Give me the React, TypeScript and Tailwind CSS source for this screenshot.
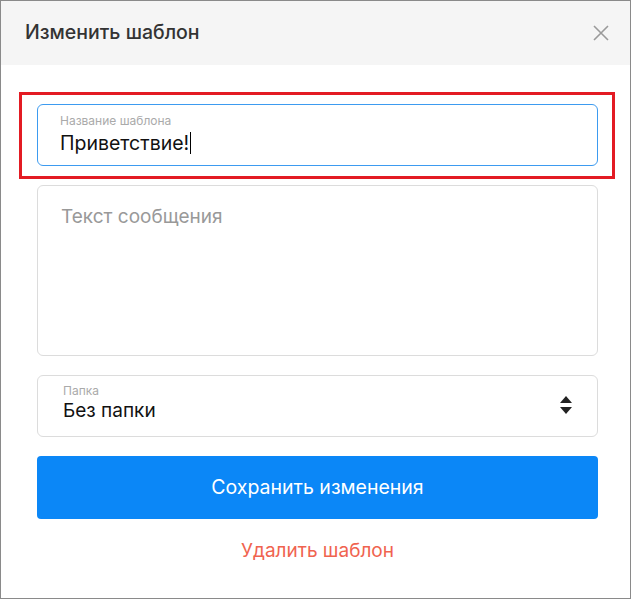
import React from "react";

export default function App() {
  return (
    <div className="w-[632px] h-[600px] bg-white" style={{ fontFamily: "Inter, Roboto, 'Noto Sans', sans-serif" }}>
      <div className="relative w-[631px] h-[599px] border border-[#8a8a8a] bg-white flex flex-col">
        <div className="h-[64px] bg-[#f5f5f5] flex items-center justify-between pl-[24px] pr-[21px]">
          <span className="text-[19.5px] font-medium text-[#333]">Изменить шаблон</span>
          <svg width="16" height="16" viewBox="0 0 16 16" className="text-[#9a9a9a]">
            <path d="M1 1 L15 15 M15 1 L1 15" stroke="currentColor" strokeWidth="1.6" />
          </svg>
        </div>
        <div className="flex flex-col pl-[36px] pt-[39px]">
          <div className="w-[561px] h-[62px] border border-[#3d9bf0] rounded-[6px] flex flex-col pl-[22px] pt-[8px]">
            <span className="text-[12px] leading-[16px] text-[#aaa]">Название шаблона</span>
            <span className="text-[19.5px] leading-[28px] text-[#111] flex items-center">
              Приветствие!<span className="inline-block w-px h-[22px] bg-black ml-[1px]" />
            </span>
          </div>
          <div className="mt-[19px] w-[561px] h-[171px] border border-[#dcdcdc] rounded-[6px] pl-[23px] pt-[18px]">
            <span className="text-[19px] leading-[26px] text-[#999]">Текст сообщения</span>
          </div>
          <div className="mt-[19px] w-[561px] h-[62px] border border-[#dcdcdc] rounded-[6px] flex items-center justify-between pl-[25px] pr-[24px]">
            <div className="flex flex-col -mt-[6px]">
              <span className="text-[12px] leading-[16px] text-[#aaa]">Папка</span>
              <span className="text-[19px] leading-[24px] text-[#111]">Без папки</span>
            </div>
            <svg width="14" height="20" viewBox="0 0 14 20" className="-mt-[3px]">
              <path d="M7 1 L13 8 L1 8 Z" fill="#222" />
              <path d="M1 12 L13 12 L7 19 Z" fill="#222" />
            </svg>
          </div>
          <div className="mt-[19px] w-[561px] h-[63px] bg-[#0b87f7] rounded-[4px] flex items-center justify-center">
            <span className="text-[19.5px] text-white">Сохранить изменения</span>
          </div>
          <div className="w-[561px] h-[64px] flex items-center justify-center">
            <span className="text-[19px] text-[#f0634f]">Удалить шаблон</span>
          </div>
        </div>
        <div className="absolute left-[18px] top-[91px] w-[596px] h-[87px] border-[3px] border-[#e31b23] pointer-events-none" />
      </div>
    </div>
  );
}
